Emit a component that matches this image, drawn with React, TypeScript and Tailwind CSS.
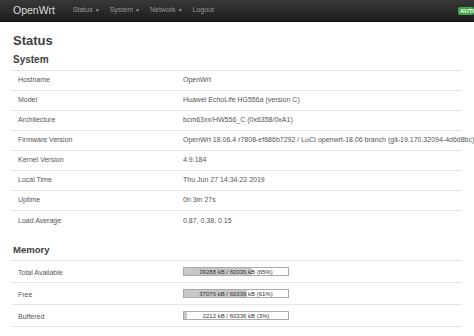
import { ChevronDown } from "lucide-react";

const systemRows: [string, string][] = [
  ["Hostname", "OpenWrt"],
  ["Model", "Huawei EchoLife HG556a (version C)"],
  ["Architecture", "bcm63xx/HW556_C (0x6358/0xA1)"],
  [
    "Firmware Version",
    "OpenWrt 18.06.4 r7808-ef686b7292 / LuCI openwrt-18.06 branch (git-19.170.32094-4d6d8bc)",
  ],
  ["Kernel Version", "4.9.184"],
  ["Local Time", "Thu Jun 27 14:34:22 2019"],
  ["Uptime", "0h 3m 27s"],
  ["Load Average", "0.87, 0.38, 0.15"],
];

const memoryRows = [
  { label: "Total Available", used: 39288, pct: 65 },
  { label: "Free", used: 37076, pct: 61 },
  { label: "Buffered", used: 2212, pct: 3 },
];

function NavItem({ label, caret = true }: { label: string; caret?: boolean }) {
  return (
    <span className="flex items-center gap-[2px] text-[7px] text-[#999]">
      {label}
      {caret && <span className="text-[5px] leading-none">▼</span>}
    </span>
  );
}

function Bar({ used, pct }: { used: number; pct: number }) {
  return (
    <div className="relative h-[9px] w-[106px] border border-[#aaa] bg-white">
      <div className="h-full bg-[#c8c8c8]" style={{ width: `${pct}%` }} />
      <div className="absolute inset-0 flex items-center justify-center text-[6px] leading-none text-[#333]">
        {used} kB / 60336 kB ({pct}%)
      </div>
    </div>
  );
}

export default function App() {
  return (
    <div
      className="h-[336px] w-[474px] overflow-hidden bg-white text-[#404040]"
      style={{ fontFamily: "'Liberation Sans', Arial, sans-serif" }}
    >
      <header className="flex h-[22px] items-center overflow-hidden border-b border-[#111] bg-gradient-to-b from-[#383838] to-[#1e1e1e] pl-[13px]">
        <span className="mr-[18px] text-[10.5px] text-[#ddd]">OpenWrt</span>
        <div className="flex flex-1 items-center gap-[10px]">
          <NavItem label="Status" />
          <NavItem label="System" />
          <NavItem label="Network" />
          <NavItem label="Logout" caret={false} />
        </div>
        <div className="w-[16px] shrink-0 overflow-hidden">
          <span className="block whitespace-nowrap rounded-[2px] bg-[#46a546] px-[2px] text-[6px] font-bold leading-[8px] text-white">
            AUTO
          </span>
        </div>
      </header>

      <main className="px-[12px]">
        <h2 className="mt-[9px] pl-[1px] text-[13px] font-bold leading-[20px]">Status</h2>
        <h3 className="pl-[1px] text-[10px] font-bold leading-[18px]">System</h3>
        <div className="mt-[1px] border-t border-[#e4e4e4]">
          {systemRows.map(([label, value], i) => (
            <div
              key={label}
              className={`flex h-[20px] items-center text-[7px] text-[#555] ${
                i < systemRows.length - 1 ? "border-b border-[#e4e4e4]" : ""
              }`}
            >
              <div className="w-[171px] shrink-0 pl-[6px]">{label}</div>
              <div className="whitespace-nowrap">{value}</div>
            </div>
          ))}
        </div>

        <h3 className="mt-[10px] pl-[1px] text-[9.5px] font-bold leading-[18px]">Memory</h3>
        <div className="mt-[1px] border-t border-[#e4e4e4]">
          {memoryRows.map((row) => (
            <div
              key={row.label}
              className="flex h-[22px] items-center border-b border-[#e4e4e4] text-[7px] text-[#555]"
            >
              <div className="w-[171px] shrink-0 pl-[6px] pt-[4px]">{row.label}</div>
              <Bar used={row.used} pct={row.pct} />
            </div>
          ))}
        </div>
      </main>
    </div>
  );
}
